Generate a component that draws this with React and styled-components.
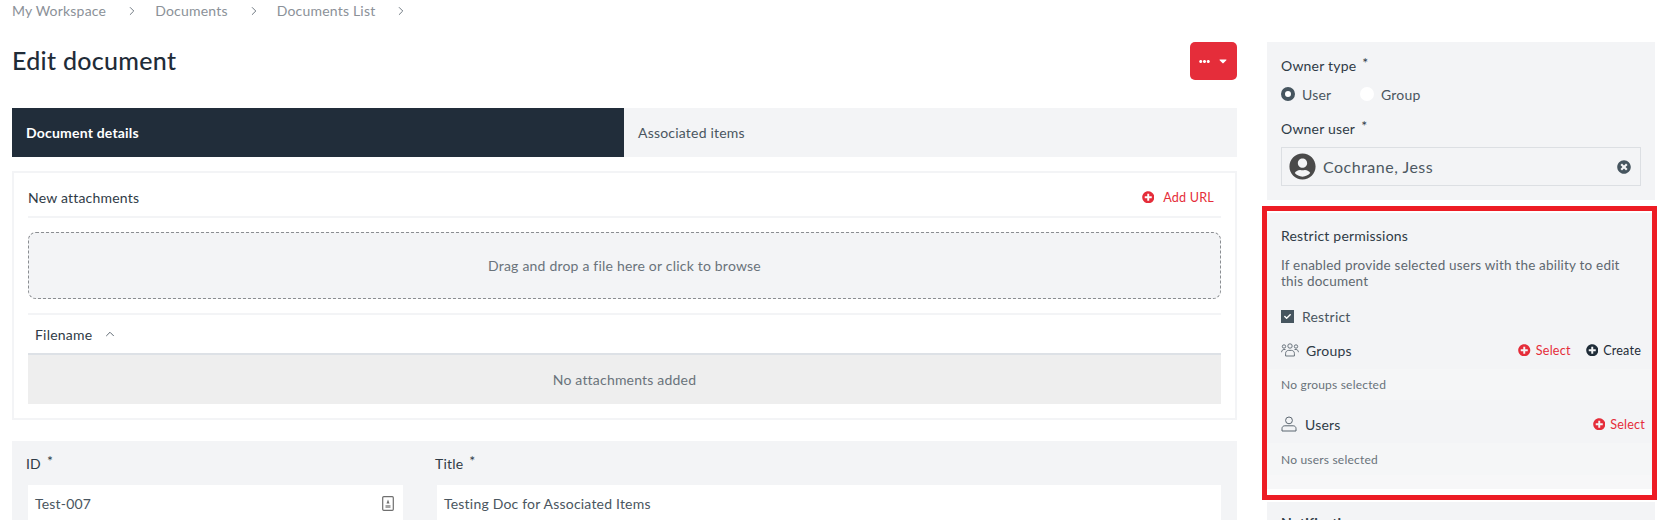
import styled, { createGlobalStyle } from "styled-components";
import { FaPlusCircle, FaTimesCircle, FaUserCircle, FaCheck, FaCaretDown, FaEllipsisH } from "react-icons/fa";
import { LuChevronRight, LuChevronUp } from "react-icons/lu";

const GlobalStyle = createGlobalStyle`
  * { box-sizing: border-box; }
  html, body { margin: 0; height: 100%; overflow: hidden; background: #fff; }
  body { font-family: "Lato", "Liberation Sans", sans-serif; font-size: 14px; color: #4a5660; letter-spacing: 0.2px; }
`;

const Page = styled.div`
  display: grid;
  grid-template-columns: 1225px 388px;
  column-gap: 30px;
  padding-left: 12px;
  height: 520px;
  overflow: hidden;
`;
const Main = styled.main`
  display: flex;
  flex-direction: column;
`;
const Crumbs = styled.nav`
  display: flex;
  align-items: center;
  height: 21px;
  color: #8b9198;
  font-size: 14px;
  svg { margin: 0 16px 0 19px; color: #5b6670; }
`;
const TitleRow = styled.div`
  display: flex;
  justify-content: space-between;
  align-items: center;
  margin-top: 21px;
  height: 38px;
`;
const Title = styled.h1`
  margin: 0;
  padding-bottom: 2px;
  font-size: 25px;
  font-weight: 500;
  color: #1f2c38;
  letter-spacing: 0.3px;
`;
const MenuButton = styled.button`
  width: 47px;
  height: 38px;
  display: flex;
  align-items: center;
  justify-content: center;
  gap: 7px;
  padding: 0;
  border: 0;
  border-radius: 5px;
  background: #e52d3a;
  color: #fff;
`;
const Tabs = styled.div`
  display: grid;
  grid-template-columns: 612px 1fr;
  height: 49px;
  margin-top: 28px;
  background: #f3f4f6;
`;
const Tab = styled.div`
  display: flex;
  align-items: center;
  padding-left: 14px;
  font-weight: ${({ $active }) => ($active ? 700 : 400)};
  background: ${({ $active }) => ($active ? "#212d3a" : "transparent")};
  color: ${({ $active }) => ($active ? "#fff" : "#4a5660")};
`;
const Card = styled.section`
  margin-top: 14px;
  height: 249px;
  border: 2px solid #f3f4f6;
  padding: 0 14px;
`;
const CardHeader = styled.div`
  display: flex;
  justify-content: space-between;
  align-items: center;
  height: 45px;
  padding: 5px 7px 0 0;
  border-bottom: 2px solid #f3f4f6;
  color: #2f3b46;
`;
const LinkAction = styled.span`
  display: inline-flex;
  align-items: center;
  gap: ${({ $gap }) => $gap}px;
  font-size: 12.6px;
  color: ${({ $dark }) => ($dark ? "#1f2c38" : "#e52d3a")};
  svg { font-size: 12.5px; }
`;
const DropZone = styled.div`
  margin-top: 14px;
  height: 67px;
  display: flex;
  align-items: center;
  justify-content: center;
  border: 1px dashed #8a8d91;
  border-radius: 8px;
  background: #f3f4f6;
  color: #6a737b;
`;
const TableHead = styled.div`
  display: flex;
  align-items: center;
  gap: 11px;
  margin-top: 14px;
  height: 42px;
  padding-left: 7px;
  border-top: 2px solid #f3f4f6;
  border-bottom: 2px solid #dde1e6;
  color: #2f3b46;
`;
const EmptyRow = styled.div`
  height: 49px;
  display: flex;
  align-items: center;
  justify-content: center;
  background: #eeeeee;
  color: #6a737b;
`;
const FieldsPanel = styled.section`
  margin-top: 21px;
  flex: 1;
  background: #f3f4f6;
  padding: 13px 16px 0;
  display: grid;
  grid-template-columns: 375px 1fr;
  column-gap: 34px;
`;
const Field = styled.div`
  display: flex;
  flex-direction: column;
`;
const Label = styled.label`
  display: block;
  height: 20px;
  line-height: 20px;
  color: #2f3b46;
  sup { margin-left: 6px; font-size: 14px; line-height: 0; position: relative; top: 3px; }
`;
const FieldLabel = styled(Label)`
  margin-left: -2px;
`;
const TextInput = styled.div`
  margin-top: 11px;
  height: 36px;
  background: #fff;
  display: flex;
  align-items: center;
  justify-content: space-between;
  padding: 0 9px 0 7px;
  color: #4a5660;
`;

const Side = styled.aside`
  position: relative;
  padding-top: 42px;
  display: flex;
  flex-direction: column;
  gap: 13px;
`;
const OwnerPanel = styled.section`
  height: 158px;
  padding: 14px 14px 0;
  background: #f3f4f6;
`;
const RadioRow = styled.div`
  display: flex;
  align-items: center;
  margin: 9px 0 16px;
  height: 18px;
`;
const Radio = styled.span`
  width: 14px;
  height: 14px;
  border-radius: 50%;
  background: #fff;
  border: ${({ $on }) => ($on ? "4.5px solid #46555f" : "0")};
  margin-right: 7px;
`;
const RadioText = styled.span`
  width: ${({ $w }) => $w}px;
`;
const OwnerBox = styled.div`
  margin-top: 8px;
  width: 360px;
  height: 39px;
  border: 1px solid #dcdfe3;
  display: flex;
  align-items: center;
  padding: 0 9px 0 7px;
  gap: 7px;
  color: #4d5862;
`;
const OwnerName = styled.span`
  flex: 1;
  padding-bottom: 1px;
  font-size: 16px;
  letter-spacing: 0.5px;
`;
const RestrictPanel = styled.section`
  height: 276px;
  padding: 13px 14px 0;
  background: linear-gradient(#f3f4f6 262px, #f7f7f8 262px);
`;
const PanelTitle = styled.div`
  color: #2f3b46;
  height: 20px;
  line-height: 20px;
`;
const Description = styled.p`
  margin: 11px 0 0;
  font-size: 13.5px;
  line-height: 16px;
  width: 360px;
  color: #5f6870;
`;
const CheckRow = styled.div`
  display: flex;
  align-items: center;
  gap: 8px;
  margin-top: 17px;
  height: 20px;
`;
const CheckBox = styled.span`
  width: 13px;
  height: 13px;
  background: #46555f;
  color: #fff;
  display: flex;
  align-items: center;
  justify-content: center;
  font-size: 7px;
`;
const GroupsHead = styled.div`
  display: flex;
  align-items: center;
  height: 24px;
  margin-top: 12px;
`;
const UsersHead = styled.div`
  display: flex;
  align-items: center;
  height: 43px;
  padding-top: 5px;
  margin-right: -4px;
`;
const SectionName = styled.span`
  flex: 1;
  margin-left: ${({ $left }) => $left}px;
  color: #2f3b46;
`;
const Actions = styled.div`
  display: flex;
  gap: 15px;
`;
const Hint = styled.div`
  display: flex;
  align-items: center;
  height: ${({ $h }) => $h}px;
  margin: ${({ $top }) => $top}px -14px 0;
  padding: 0 14px;
  background: #f5f6f7;
  font-size: 12px;
  color: #69727a;
`;
const NotifyPanel = styled.section`
  padding: 12px 14px;
  background: #f3f4f6;
`;
const NotifyTitle = styled.div`
  color: #2f3b46;
  font-weight: 700;
`;
const Frame = styled.div`
  position: absolute;
  left: -5px;
  top: 206px;
  right: -2px;
  height: 294px;
  border: 5px solid #ed1c24;
  pointer-events: none;
`;

const GroupsIcon = () => (
  <svg width="18" height="14" viewBox="0 0 18 14" fill="none" stroke="#5b6670" strokeWidth="0.9">
    <circle cx="3" cy="3.5" r="1.7" />
    <circle cx="9" cy="3" r="2.2" />
    <circle cx="15" cy="3.5" r="1.7" />
    <path d="M.6 9.2c0-1.6 1-2.7 2.4-2.7h1.5M17.4 9.2c0-1.6-1-2.7-2.4-2.7h-1.5" />
    <path d="M4.6 13v-2.6c0-1.8 1.3-3 3-3h2.8c1.7 0 3 1.2 3 3V13z" />
  </svg>
);
const UserIcon = () => (
  <svg width="16" height="16" viewBox="0 0 16 16" fill="none" stroke="#5b6670" strokeWidth="1">
    <circle cx="8" cy="4.4" r="3.4" />
    <path d="M1 15v-2.4c0-1.7 1.2-2.8 2.8-2.8h8.4c1.6 0 2.8 1.1 2.8 2.8V15z" />
  </svg>
);
const ContactIcon = () => (
  <svg width="12" height="15" viewBox="0 0 12 15" fill="none">
    <rect x="0.7" y="0.7" width="10.6" height="13.6" rx="1" stroke="#6f6f6f" strokeWidth="1.2" />
    <path d="M6 3.5 7.5 7.5h-3z" fill="#6f6f6f" />
    <rect x="3.5" y="9" width="5" height="3" fill="#a5a5a5" />
  </svg>
);

export default function App() {
  return (
    <>
      <GlobalStyle />
      <Page>
        <Main>
          <Crumbs>
            My Workspace<LuChevronRight size={14} strokeWidth={1.5} />
            Documents<LuChevronRight size={14} strokeWidth={1.5} />
            Documents List<LuChevronRight size={14} strokeWidth={1.5} />
          </Crumbs>
          <TitleRow>
            <Title>Edit document</Title>
            <MenuButton aria-label="More">
              <FaEllipsisH size={11} />
              <FaCaretDown size={12} />
            </MenuButton>
          </TitleRow>
          <Tabs>
            <Tab $active>Document details</Tab>
            <Tab>Associated items</Tab>
          </Tabs>
          <Card>
            <CardHeader>
              New attachments
              <LinkAction $gap={9}><FaPlusCircle />Add URL</LinkAction>
            </CardHeader>
            <DropZone>Drag and drop a file here or click to browse</DropZone>
            <TableHead>Filename <LuChevronUp size={14} strokeWidth={1.5} color="#4a5660" /></TableHead>
            <EmptyRow>No attachments added</EmptyRow>
          </Card>
          <FieldsPanel>
            <Field>
              <FieldLabel>ID<sup>*</sup></FieldLabel>
              <TextInput>Test-007 <ContactIcon /></TextInput>
            </Field>
            <Field>
              <FieldLabel>Title<sup>*</sup></FieldLabel>
              <TextInput>Testing Doc for Associated Items</TextInput>
            </Field>
          </FieldsPanel>
        </Main>
        <Side>
          <OwnerPanel>
            <Label>Owner type<sup>*</sup></Label>
            <RadioRow>
              <Radio $on />
              <RadioText $w={58}>User</RadioText>
              <Radio />
              <RadioText>Group</RadioText>
            </RadioRow>
            <Label>Owner user<sup>*</sup></Label>
            <OwnerBox>
              <FaUserCircle size={27} color="#4a4a4a" />
              <OwnerName>Cochrane, Jess</OwnerName>
              <FaTimesCircle size={14} color="#46555f" />
            </OwnerBox>
          </OwnerPanel>
          <RestrictPanel>
            <PanelTitle>Restrict permissions</PanelTitle>
            <Description>If enabled provide selected users with the ability to edit this document</Description>
            <CheckRow>
              <CheckBox><FaCheck /></CheckBox>
              Restrict
            </CheckRow>
            <GroupsHead>
              <GroupsIcon />
              <SectionName $left={7}>Groups</SectionName>
              <Actions>
                <LinkAction $gap={5}><FaPlusCircle />Select</LinkAction>
                <LinkAction $dark $gap={5}><FaPlusCircle />Create</LinkAction>
              </Actions>
            </GroupsHead>
            <Hint $top={7} $h={31}>No groups selected</Hint>
            <UsersHead>
              <UserIcon />
              <SectionName $left={8}>Users</SectionName>
              <LinkAction $gap={5}><FaPlusCircle />Select</LinkAction>
            </UsersHead>
            <Hint $top={0} $h={32}>No users selected</Hint>
          </RestrictPanel>
          <NotifyPanel>
            <NotifyTitle>Notifications</NotifyTitle>
          </NotifyPanel>
          <Frame />
        </Side>
      </Page>
    </>
  );
}
